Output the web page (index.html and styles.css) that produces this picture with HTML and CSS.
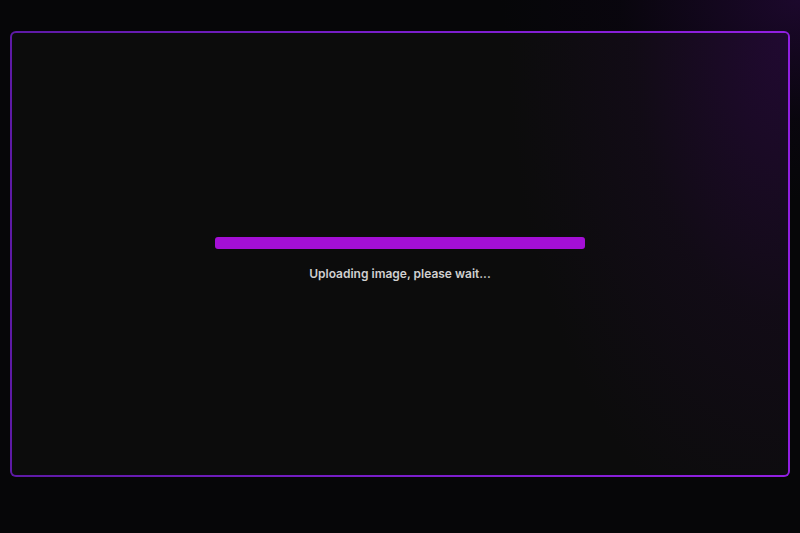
FILE: index.html
```html
<!DOCTYPE html>
<html>
<head>
<meta charset="utf-8">
<link rel="stylesheet" href="styles.css">
</head>
<body>
<div class="page">
  <div class="panel">
    <div class="loader">
      <div class="bar"></div>
      <div class="label">Uploading image, please wait...</div>
    </div>
  </div>
</div>
</body>
</html>
```
FILE: styles.css
```css
html, body {
  margin: 0;
  padding: 0;
  width: 800px;
  height: 533px;
  overflow: hidden;
}
body {
  background: #060608;
  font-family: "Inter", "Liberation Sans", sans-serif;
}
.page {
  width: 800px;
  height: 533px;
  box-sizing: border-box;
  padding: 31px 10px 56px 10px;
  background: radial-gradient(ellipse 300px 200px at 100% 0%, rgba(50, 10, 80, 0.5), rgba(20, 5, 35, 0.2) 60%, rgba(0,0,0,0) 100%), #060608;
}
.panel {
  height: 100%;
  box-sizing: border-box;
  border: 2px solid transparent;
  border-radius: 6px;
  background:
    radial-gradient(ellipse 280px 520px at 100% 0%, rgba(40, 8, 62, 0.75), rgba(28, 10, 40, 0.35) 55%, rgba(14, 14, 14, 0) 100%) padding-box,
    linear-gradient(#0c0c0c, #0c0c0c) padding-box,
    linear-gradient(90deg, #5e1aa6 0%, #7a1ecb 50%, #921fe2 100%) border-box;
  display: flex;
  align-items: center;
  justify-content: center;
  padding-top: 10px;
}
.loader {
  display: flex;
  flex-direction: column;
  align-items: center;
  gap: 17px;
}
.bar {
  width: 370px;
  height: 12px;
  border-radius: 3px;
  background: #a40fd6;
}
.label {
  color: #d0d0d0;
  font-size: 12px;
  font-weight: 600;
  line-height: 16px;
}
```
